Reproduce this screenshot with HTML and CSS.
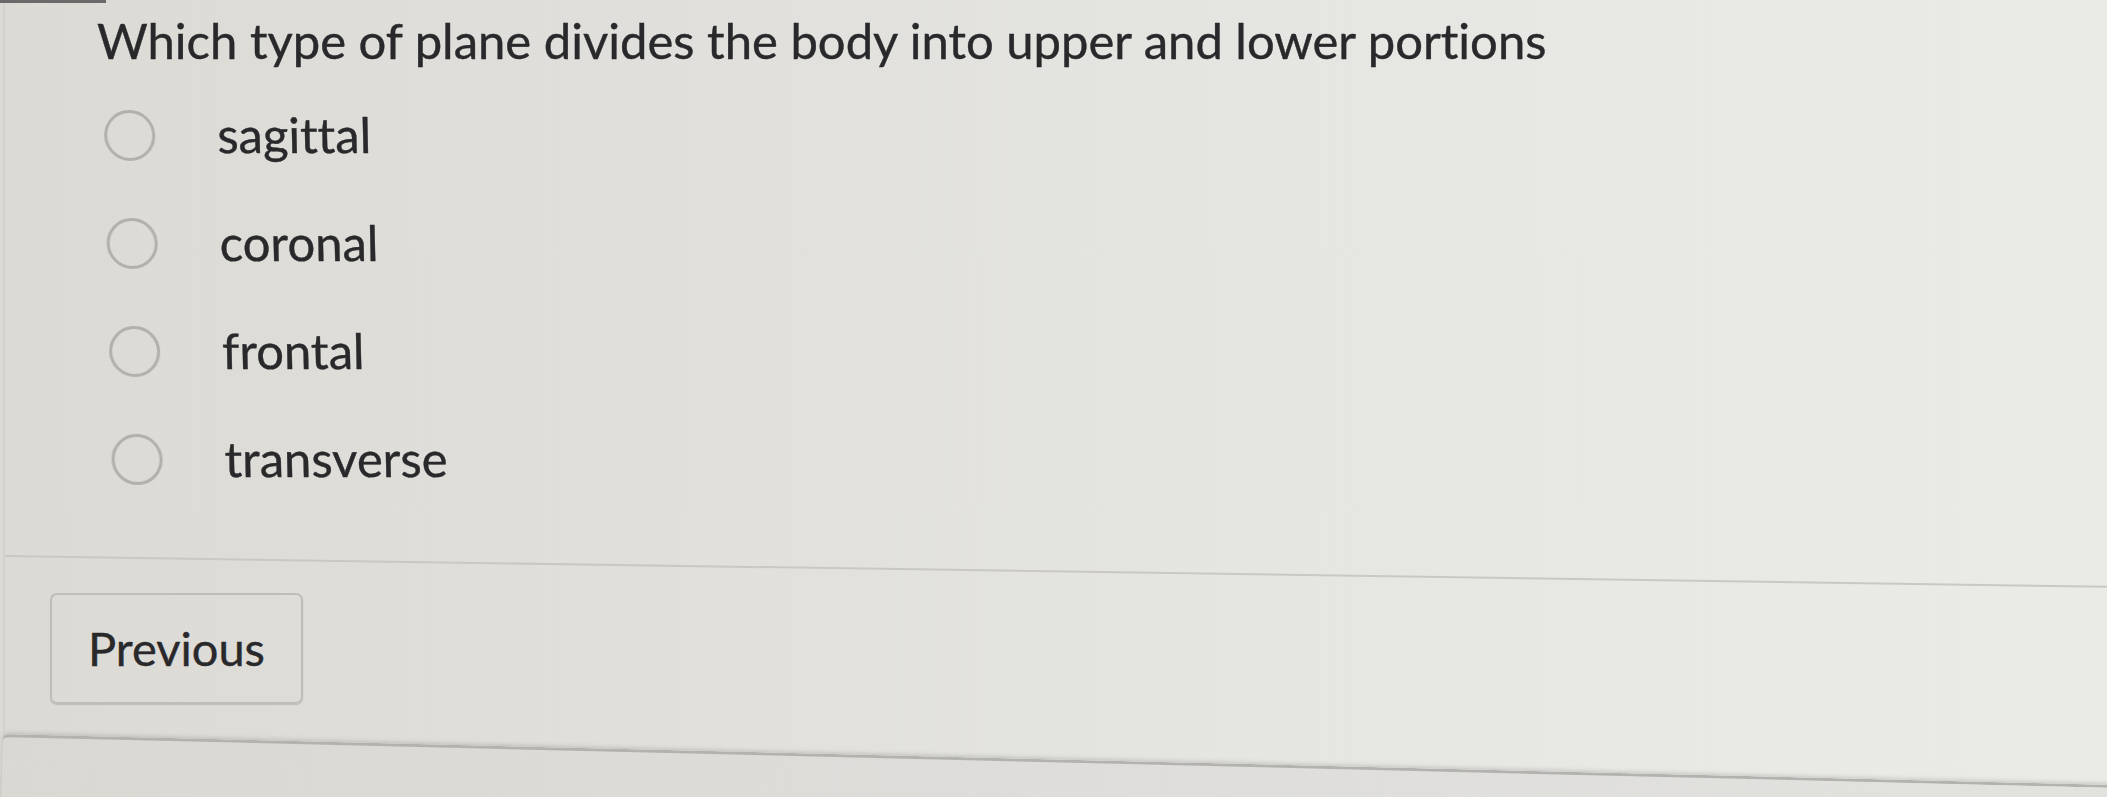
FILE: index.html
```html
<!DOCTYPE html>
<html lang="en">
<head>
<meta charset="utf-8">
<title>Question</title>
<link rel="stylesheet" href="styles.css">
</head>
<body>
<div class="page">
  <div class="topmark"></div>
  <div class="card">
    <h1 class="question">Which type of plane divides the body into upper and lower portions</h1>
    <ul class="options">
      <li class="option"><span class="radio"></span><span class="label">sagittal</span></li>
      <li class="option"><span class="radio"></span><span class="label">coronal</span></li>
      <li class="option"><span class="radio"></span><span class="label">frontal</span></li>
      <li class="option"><span class="radio"></span><span class="label">transverse</span></li>
    </ul>
    <div class="divider"></div>
    <div class="actions">
      <button class="btn" type="button">Previous</button>
    </div>
  </div>
</div>
</body>
</html>
```

FILE: styles.css
```css
html, body {
  margin: 0;
  padding: 0;
}
body {
  width: 2107px;
  height: 797px;
  overflow: hidden;
  font-family: Lato, "Open Sans", sans-serif;
  font-variant-ligatures: none;
  color: #2f2f31;
  background: #dcdbd6;
}
.page {
  position: relative;
  width: 2107px;
  height: 797px;
  overflow: hidden;
  background: linear-gradient(90deg, #dbdad5 0%, #e0dfdb 30%, #e5e5e1 60%, #e9e9e6 85%, #eaeae7 100%);
}
.page::after {
  content: "";
  position: absolute;
  left: 3px;
  right: -40px;
  top: 734px;
  height: 200px;
  background: linear-gradient(90deg, #d9d8d3 0%, #dedddb 50%, #e2e2df 100%);
  border-top: 3px solid #b3b2ae;
  box-shadow: 0 -1px 4px rgba(120, 120, 115, 0.35);
  border-top-left-radius: 6px;
  transform-origin: 0 0;
  transform: rotate(1.38deg);
}
.topmark {
  position: absolute;
  left: 0;
  top: 0;
  width: 106px;
  height: 3px;
  background: #6a6a6a;
}
.card {
  padding: 11px 0 0 0;
  margin-left: 3px;
  border-left: 2px solid #d3d2ce;
  height: 760px;
  box-sizing: border-box;
}
.question {
  margin: 0 0 0 92px;
  font-size: 49px;
  font-weight: 400;
  line-height: 1.2;
  color: #29292c;
  -webkit-text-stroke: 0.4px #29292c;
}
.options {
  list-style: none;
  margin: 11px 0 0 0;
  padding: 0 0 0 98px;
  transform-origin: 0 0;
  transform: skewX(1.3deg);
}
.option {
  display: flex;
  align-items: center;
  height: 108px;
}
.radio {
  flex: none;
  width: 51px;
  height: 51px;
  border: 3px solid #b1b0ac;
  border-radius: 50%;
  box-sizing: border-box;
  filter: blur(0.4px);
}
.label {
  margin-left: 62px;
  margin-bottom: 2px;
  font-size: 49px;
  line-height: 1.2;
  color: #29292c;
  -webkit-text-stroke: 0.4px #29292c;
}
.divider {
  margin-top: 42px;
  height: 2px;
  background: #c9c8c4;
  transform-origin: 0 0;
  transform: rotate(0.84deg);
  width: 2140px;
}
.actions {
  padding: 36px 0 0 45px;
}
.btn {
  width: 253px;
  height: 111px;
  box-sizing: border-box;
  border: 2px solid #bebdb9;
  border-radius: 7px;
  background: transparent;
  box-shadow: 0 1px 1px rgba(120, 120, 115, 0.3);
  font-family: Lato, "Open Sans", sans-serif;
  font-variant-ligatures: none;
  font-size: 47px;
  color: #29292c;
  -webkit-text-stroke: 0.4px #29292c;
  padding: 0;
  text-align: center;
}
```
